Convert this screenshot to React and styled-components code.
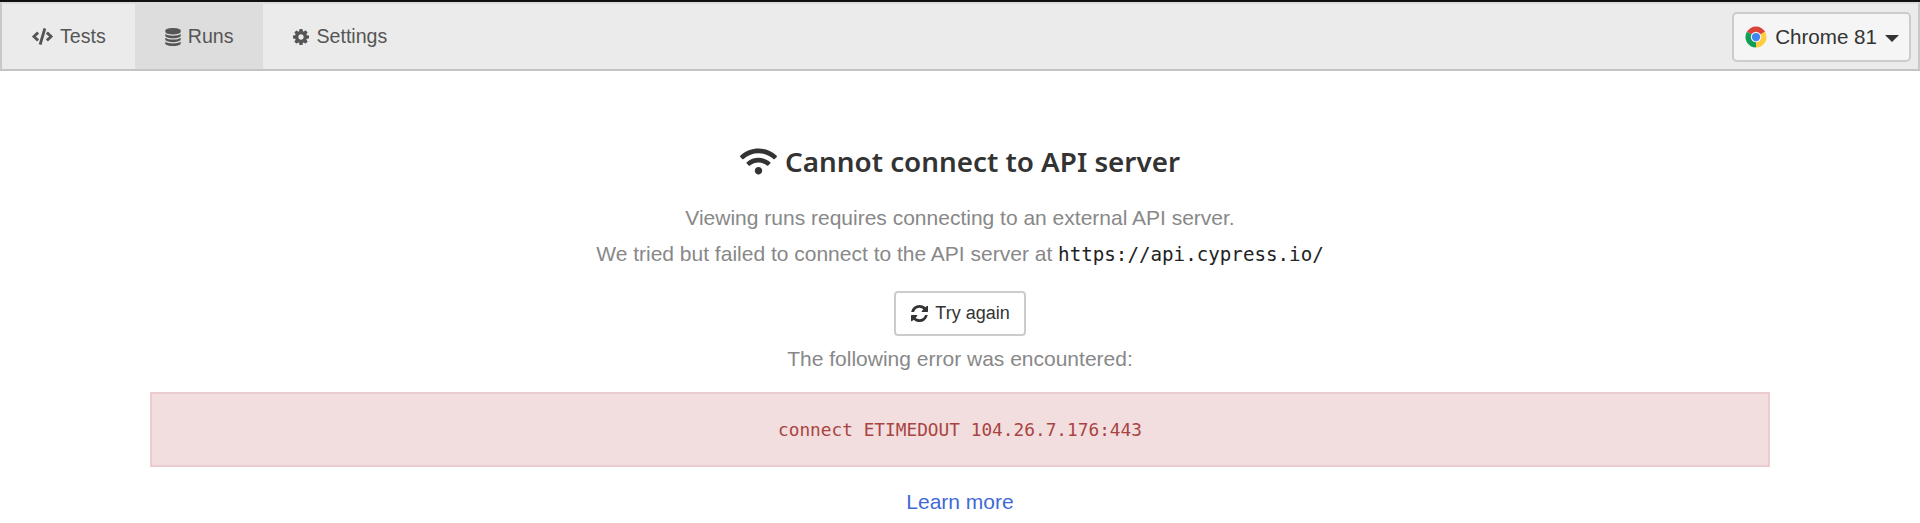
import React from "react"
import styled, { createGlobalStyle } from "styled-components"
import { FaCode, FaWifi } from "react-icons/fa"

const GlobalStyle = createGlobalStyle`
  html, body {
    margin: 0;
    padding: 0;
    background: #fff;
    overflow: hidden;
    font-family: "Liberation Sans", Arial, sans-serif;
    color: #333;
  }
`

const Page = styled.div`
  height: 523px;
  border-top: 2px solid #111;
  box-sizing: border-box;
`

const Nav = styled.nav`
  display: flex;
  justify-content: space-between;
  align-items: stretch;
  height: 69px;
  box-sizing: border-box;
  background: #ebebeb;
  border-top: 2px solid #ddd;
  border-left: 2px solid #c8c8c8;
  border-right: 2px solid #c8c8c8;
  border-bottom: 2px solid #c4c4c4;
`

const Tabs = styled.div`
  display: flex;
`

const Tab = styled.a`
  display: flex;
  align-items: center;
  gap: 7px;
  padding: 0 ${(p) => p.$right || 30}px 0 30px;
  font-size: 19.6px;
  color: #555;
  background: ${(p) => (p.$active ? "#dddddd" : "transparent")};
`

const TabIcon = styled.svg`
  width: ${(p) => p.$size || 16}px;
  height: ${(p) => p.$size || 18}px;
  fill: #555;
  color: #555;
`

const BrowserButton = styled.button`
  display: flex;
  align-items: center;
  align-self: center;
  height: 50px;
  margin-right: 7px;
  padding: 0 10px 0 11px;
  box-sizing: border-box;
  background: #f5f5f5;
  border: 2px solid #ccc;
  border-radius: 5px;
  font: inherit;
  font-size: 20.6px;
  color: #333;
`

const BrowserName = styled.span`
  margin: 0 8px 0 8px;
`

const Caret = styled.span`
  width: 0;
  height: 0;
  margin-top: 3px;
  border-left: 7.5px solid transparent;
  border-right: 7.5px solid transparent;
  border-top: 7.5px solid #333;
`

const Content = styled.main`
  display: flex;
  flex-direction: column;
  align-items: center;
  padding: 70px 150px 0;
`

const Title = styled.h4`
  display: flex;
  align-items: center;
  gap: 8px;
  margin: 0;
  height: 40px;
  font-family: "Noto Sans", "Open Sans", sans-serif;
  font-size: 27.8px;
  font-weight: 600;
  color: #333;
  svg {
    font-size: 37px;
  }
`

const Message = styled.p`
  margin: ${(p) => p.$top || 0}px 0 0;
  font-size: 21px;
  line-height: 36px;
  color: #888;
`

const Code = styled.code`
  font-family: "DejaVu Sans Mono", monospace;
  font-size: 19.2px;
  color: #222;
`

const RetryButton = styled.button`
  display: flex;
  align-items: center;
  gap: 7px;
  height: 45px;
  margin-top: 18px;
  padding: 0 14px 0 15px;
  box-sizing: border-box;
  background: #fff;
  border: 2px solid #ccc;
  border-radius: 4px;
  font: inherit;
  font-size: 18px;
  color: #333;
`

const RetryIcon = styled.svg`
  width: 17px;
  height: 17px;
  fill: #333;
`

const ErrorBox = styled.pre`
  align-self: stretch;
  display: flex;
  align-items: center;
  justify-content: center;
  height: 75px;
  margin: 15px 0 0;
  box-sizing: border-box;
  background: #f2dede;
  border: 2px solid #ebccd1;
  font-family: "DejaVu Sans Mono", monospace;
  font-size: 17.8px;
  color: #a94442;
`

const LearnMore = styled.a`
  margin-top: 21px;
  font-size: 21px;
  line-height: 28px;
  color: #3f6ad8;
`

function ChromeLogo() {
  return (
    <svg width="22" height="22" viewBox="0 0 48 48">
      <path fill="#db4437" d="M24 24L4.1 12.5A23 23 0 0 1 43.9 12.5z" />
      <path fill="#0f9d58" d="M24 24L24 47A23 23 0 0 1 4.1 12.5z" />
      <path fill="#ffcd40" d="M24 24L43.9 12.5A23 23 0 0 1 24 47z" />
      <circle cx="24" cy="24" r="11.5" fill="#f1f1f1" />
      <circle cx="24" cy="24" r="9" fill="#4285f4" />
    </svg>
  )
}

// font awesome 4 shapes, the 5 ones in react-icons look different here
const databasePath =
  "M768 768q237 0 443-43t325-127v170q0 69-103 128t-280 93.5-385 34.5-385-34.5-280-93.5-103-128v-170q119 84 325 127t443 43zm0 768q237 0 443-43t325-127v170q0 69-103 128t-280 93.5-385 34.5-385-34.5-280-93.5-103-128v-170q119 84 325 127t443 43zm0-384q237 0 443-43t325-127v170q0 69-103 128t-280 93.5-385 34.5-385-34.5-280-93.5-103-128v-170q119 84 325 127t443 43zm0-1152q208 0 385 34.5t280 93.5 103 128v128q0 69-103 128t-280 93.5-385 34.5-385-34.5-280-93.5-103-128v-128q0-69 103-128t280-93.5 385-34.5z"
const cogPath =
  "M1024 768q0-106-75-181t-181-75-181 75-75 181 75 181 181 75 181-75 75-181zm512-109v222q0 12-8 23t-20 13l-185 28q-19 54-39 91 35 50 107 138 10 12 10 25t-9 23q-27 37-99 108t-94 71q-12 0-26-9l-138-108q-44 23-91 38-16 136-29 186-7 28-36 28h-222q-14 0-24.5-8.5t-11.5-21.5l-28-184q-49-16-90-37l-141 107q-10 9-25 9-14 0-25-11-126-114-165-168-7-10-7-23 0-12 8-23 15-21 51-66.5t54-70.5q-27-50-41-99l-183-27q-13-2-21-12.5t-8-23.5v-222q0-12 8-23t19-13l186-28q14-46 39-92-40-57-107-138-10-12-10-24 0-10 9-23 26-36 98.5-107.5t94.5-71.5q13 0 26 10l138 107q44-23 91-38 16-136 29-186 7-28 36-28h222q14 0 24.5 8.5t11.5 21.5l28 184q49 16 90 37l142-107q9-9 24-9 13 0 25 10 129 119 165 170 7 8 7 22 0 12-8 23-15 21-51 66.5t-54 70.5q26 50 41 98l183 28q13 2 21 12.5t8 23.5z"
const refreshPath =
  "M1511 928q0 5-1 7-64 268-268 434.5t-478 166.5q-146 0-282.5-55t-243.5-157l-129 129q-19 19-45 19t-45-19-19-45v-448q0-26 19-45t45-19h448q26 0 45 19t19 45-19 45l-137 137q71 66 161 102t187 36q134 0 250-65t186-179q11-17 53-117 8-23 30-23h192q13 0 22.5 9.5t9.5 22.5zm25-800v448q0 26-19 45t-45 19h-448q-26 0-45-19t-19-45 19-45l138-138q-148-137-349-137-134 0-250 65t-186 179q-11 17-53 117-8 23-30 23h-199q-13 0-22.5-9.5t-9.5-22.5v-7q65-268 270-434.5t480-166.5q146 0 284 55.5t245 156.5l130-129q19-19 45-19t45 19 19 45z"

export default function App() {
  return (
    <Page>
      <GlobalStyle />
      <Nav>
        <Tabs>
          <Tab $right={29}>
            <TabIcon as={FaCode} $size={21} />
            Tests
          </Tab>
          <Tab $active>
            <TabIcon viewBox="0 0 1536 1792">
              <path d={databasePath} />
            </TabIcon>
            Runs
          </Tab>
          <Tab>
            <TabIcon viewBox="0 0 1536 1536">
              <path d={cogPath} />
            </TabIcon>
            Settings
          </Tab>
        </Tabs>
        <BrowserButton>
          <ChromeLogo />
          <BrowserName>Chrome 81</BrowserName>
          <Caret />
        </BrowserButton>
      </Nav>
      <Content>
        <Title>
          <FaWifi />
          Cannot connect to API server
        </Title>
        <Message $top={19}>Viewing runs requires connecting to an external API server.</Message>
        <Message>
          We tried but failed to connect to the API server at <Code>https://api.cypress.io/</Code>
        </Message>
        <RetryButton>
          <RetryIcon viewBox="0 0 1536 1536">
            <path d={refreshPath} />
          </RetryIcon>
          Try again
        </RetryButton>
        <Message $top={5}>The following error was encountered:</Message>
        <ErrorBox>connect ETIMEDOUT 104.26.7.176:443</ErrorBox>
        <LearnMore>Learn more</LearnMore>
      </Content>
    </Page>
  )
}
